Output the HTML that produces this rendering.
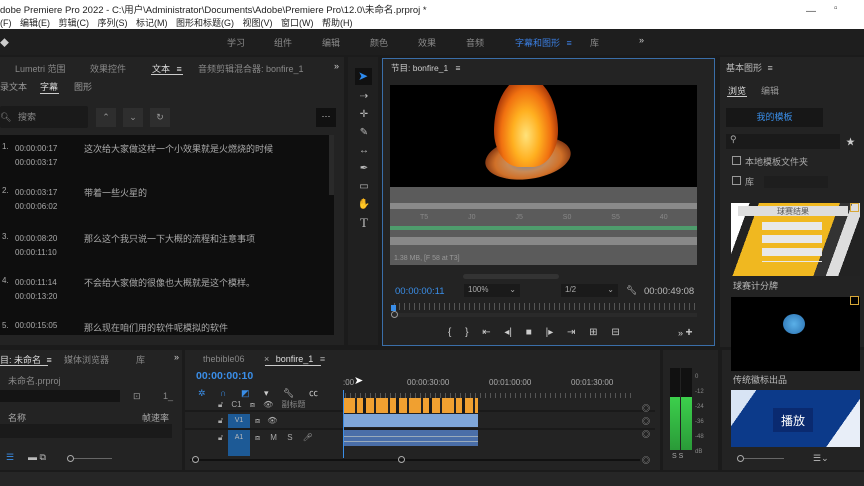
<!DOCTYPE html>
<html><head><meta charset="utf-8"><style>
*{margin:0;padding:0;box-sizing:border-box}
body{width:864px;height:486px;overflow:hidden;background:#1b1b1b;font-family:"Liberation Sans","Noto Sans CJK SC",sans-serif;font-size:9px;color:#9a9a9a;position:relative}
.a{position:absolute;white-space:nowrap}
</style></head><body>
<div class="a" style="left:0;top:0;width:864px;height:29px;background:#fff"></div>
<div class="a" style="left:0;top:2px;font-size:9.5px;color:#222">dobe Premiere Pro 2022 - C:\用户\Administrator\Documents\Adobe\Premiere Pro\12.0\未命名.prproj *</div>
<div class="a" style="left:0;top:16px;font-size:9px;color:#222;word-spacing:6px">(F) 编辑(E) 剪辑(C) 序列(S) 标记(M) 图形和标题(G) 视图(V) 窗口(W) 帮助(H)</div>
<div class="a" style="left:806px;top:6px;color:#444;font-size:10px">—</div>
<div class="a" style="left:834px;top:3px;color:#444;font-size:10px">▫</div>
<div class="a" style="left:0;top:29px;width:864px;height:26px;background:#1e1e1e"></div>
<div class="a" style="left:0;top:36px;color:#ccc">◆</div>
<div class="a" style="left:227px;top:36px;color:#8a8a8a">学习</div>
<div class="a" style="left:274px;top:36px;color:#8a8a8a">组件</div>
<div class="a" style="left:322px;top:36px;color:#8a8a8a">编辑</div>
<div class="a" style="left:370px;top:36px;color:#8a8a8a">颜色</div>
<div class="a" style="left:418px;top:36px;color:#8a8a8a">效果</div>
<div class="a" style="left:466px;top:36px;color:#8a8a8a">音频</div>
<div class="a" style="left:515px;top:36px;color:#3a7ee0">字幕和图形 <span style="margin-left:4px">≡</span></div>
<div class="a" style="left:590px;top:36px;color:#8a8a8a">库</div>
<div class="a" style="left:639px;top:35px;color:#ccc">»</div>
<div class="a" style="left:0;top:57px;width:344px;height:288px;background:#232323"></div>
<div class="a" style="left:15px;top:62px;color:#888">Lumetri 范围</div>
<div class="a" style="left:90px;top:62px;color:#888">效果控件</div>
<div class="a" style="left:152px;top:62px;color:#ddd">文本 <span style="margin-left:4px">≡</span></div>
<div class="a" style="left:151px;top:74px;width:32px;height:1px;background:#ccc"></div>
<div class="a" style="left:198px;top:62px;color:#888">音频剪辑混合器: bonfire_1</div>
<div class="a" style="left:334px;top:61px;color:#ccc">»</div>
<div class="a" style="left:0;top:80px;color:#999">录文本</div>
<div class="a" style="left:40px;top:80px;color:#ddd">字幕</div>
<div class="a" style="left:40px;top:93px;width:19px;height:1px;background:#ccc"></div>
<div class="a" style="left:74px;top:80px;color:#999">图形</div>
<div class="a" style="left:0;top:106px;width:88px;height:22px;background:#1a1a1a;border-radius:2px"></div>
<div class="a" style="left:0;top:110px;color:#888">🔍︎ <span style="margin-left:4px">搜索</span></div>
<div class="a" style="left:96px;top:108px;width:20px;height:19px;background:#2e2e2e;color:#999;text-align:center;line-height:19px">⌃</div>
<div class="a" style="left:123px;top:108px;width:20px;height:19px;background:#2e2e2e;color:#999;text-align:center;line-height:19px">⌄</div>
<div class="a" style="left:150px;top:108px;width:20px;height:19px;background:#2e2e2e;color:#999;text-align:center;line-height:19px">↻</div>
<div class="a" style="left:316px;top:108px;width:20px;height:19px;background:#111;color:#ddd;text-align:center;line-height:17px">···</div>
<div class="a" style="left:0;top:135px;width:334px;height:200px;background:#0e0e0e"></div>
<div class="a" style="left:329px;top:135px;width:5px;height:60px;background:#2a2a2a"></div>
<div class="a" style="left:2px;top:142px;color:#aaa;font-size:8px">1.</div>
<div class="a" style="left:15px;top:142px;line-height:14px;color:#aaa;font-size:8px">00:00:00:17<br>00:00:03:17</div>
<div class="a" style="left:84px;top:142px;color:#aaa">这次给大家做这样一个小效果就是火燃烧的时候</div>
<div class="a" style="left:2px;top:186px;color:#aaa;font-size:8px">2.</div>
<div class="a" style="left:15px;top:186px;line-height:14px;color:#aaa;font-size:8px">00:00:03:17<br>00:00:06:02</div>
<div class="a" style="left:84px;top:186px;color:#aaa">带着一些火星的</div>
<div class="a" style="left:2px;top:232px;color:#aaa;font-size:8px">3.</div>
<div class="a" style="left:15px;top:232px;line-height:14px;color:#aaa;font-size:8px">00:00:08:20<br>00:00:11:10</div>
<div class="a" style="left:84px;top:232px;color:#aaa">那么这个我只说一下大概的流程和注意事项</div>
<div class="a" style="left:2px;top:276px;color:#aaa;font-size:8px">4.</div>
<div class="a" style="left:15px;top:276px;line-height:14px;color:#aaa;font-size:8px">00:00:11:14<br>00:00:13:20</div>
<div class="a" style="left:84px;top:276px;color:#aaa">不会给大家做的很像也大概就是这个模样。</div>
<div class="a" style="left:2px;top:321px;color:#aaa;font-size:8px">5.</div>
<div class="a" style="left:15px;top:321px;color:#aaa;font-size:8px">00:00:15:05</div>
<div class="a" style="left:84px;top:321px;color:#aaa">那么现在咱们用的软件呢模拟的软件</div>
<div class="a" style="left:348px;top:57px;width:30px;height:288px;background:#202020"></div>
<div class="a" style="left:355px;top:68px;width:17px;height:17px;background:#111"></div>
<div class="a" style="left:358px;top:69px;color:#2e8cf0;font-size:12px">➤</div>
<div class="a" style="left:356px;top:88px;color:#bbb;font-size:10px;line-height:18px;text-align:center;width:16px">⇢<br>✛<br>✎<br>↔<br>✒<br>▭<br>✋<br><span style="font-family:'Liberation Serif';font-size:13px">T</span></div>
<div class="a" style="left:382px;top:58px;width:333px;height:288px;border:1px solid #3a6ea8;background:#232323"></div>
<div class="a" style="left:391px;top:62px;color:#ccc;font-size:8.5px">节目: bonfire_1 <span style="margin-left:5px">≡</span></div>
<div class="a" style="left:390px;top:85px;width:307px;height:102px;background:#000;overflow:hidden">
 <div style="position:absolute;left:95px;top:52px;width:86px;height:42px;border-radius:50%;background:radial-gradient(ellipse at 50% 55%,#5a86c0 0%,#c98a55 35%,#d07028 55%,#7a3010 75%,rgba(0,0,0,0) 100%);transform:rotate(-8deg)"></div>
 <div style="position:absolute;left:104px;top:-8px;width:64px;height:90px;border-radius:50% 50% 40% 40%/60% 60% 40% 40%;background:radial-gradient(ellipse at 50% 65%,#ffe27a 0%,#ffb020 30%,#f07010 55%,#a03008 75%,rgba(0,0,0,0) 100%)"></div>
</div>
<div class="a" style="left:390px;top:187px;width:307px;height:78px;background:#5b5b5b"></div>
<div class="a" style="left:390px;top:203px;width:307px;height:6px;background:#8a8a8a"></div>
<div class="a" style="left:390px;top:226px;width:307px;height:4px;background:#4e9c6c"></div>
<div class="a" style="left:390px;top:237px;width:307px;height:8px;background:#888"></div>
<div class="a" style="left:390px;top:214px;width:307px;font-size:7px;color:#888;word-spacing:38px;padding-left:30px">T5 J0 J5 S0 S5 40</div>
<div class="a" style="left:394px;top:255px;font-size:7px;color:#999">1.38 MB, [F 58 at T3]</div>
<div class="a" style="left:463px;top:274px;width:96px;height:5px;background:#333;border-radius:3px"></div>
<div class="a" style="left:395px;top:286px;color:#3a8ee8;font-size:9.5px">00:00:00:11</div>
<div class="a" style="left:464px;top:284px;width:56px;height:13px;background:#1a1a1a;color:#aaa;font-size:8px;padding:1px 4px">100% <span style="float:right">⌄</span></div>
<div class="a" style="left:561px;top:284px;width:57px;height:13px;background:#1a1a1a;color:#aaa;font-size:8px;padding:1px 4px">1/2 <span style="float:right">⌄</span></div>
<div class="a" style="left:626px;top:285px;color:#ccc">🔧︎</div>
<div class="a" style="left:644px;top:286px;color:#bbb;font-size:9.5px">00:00:49:08</div>
<div class="a" style="left:394px;top:303px;width:304px;height:7px;background:repeating-linear-gradient(90deg,#555 0 1px,transparent 1px 5px)"></div>
<div class="a" style="left:391px;top:305px;width:5px;height:6px;background:#3a8ee8"></div>
<div class="a" style="left:393px;top:313px;width:304px;height:4px;background:#2a2a2a"></div>
<div class="a" style="left:391px;top:311px;width:7px;height:7px;border:1px solid #999;border-radius:50%"></div>
<div class="a" style="left:448px;top:327px;color:#ccc;font-size:10px;word-spacing:11px">{ } ⇤ ◂| ■ |▸ ⇥ ⊞ ⊟</div>
<div class="a" style="left:678px;top:325px;color:#ccc">» <b style="font-size:12px">+</b></div>
<div class="a" style="left:720px;top:57px;width:144px;height:290px;background:#232323"></div>
<div class="a" style="left:726px;top:61px;color:#bbb">基本图形 <span style="margin-left:3px">≡</span></div>
<div class="a" style="left:728px;top:84px;color:#ddd">浏览</div>
<div class="a" style="left:727px;top:96px;width:20px;height:1px;background:#ccc"></div>
<div class="a" style="left:761px;top:84px;color:#999">编辑</div>
<div class="a" style="left:726px;top:108px;width:97px;height:19px;background:#171717;color:#3a8ee8;text-align:center;line-height:19px">我的模板</div>
<div class="a" style="left:726px;top:134px;width:114px;height:15px;background:#1a1a1a;color:#aaa;padding-left:4px">⚲</div>
<div class="a" style="left:846px;top:135px;color:#ccc">★</div>
<div class="a" style="left:732px;top:156px;width:9px;height:9px;border:1px solid #999"></div>
<div class="a" style="left:745px;top:155px;color:#aaa">本地模板文件夹</div>
<div class="a" style="left:732px;top:176px;width:9px;height:9px;border:1px solid #999"></div>
<div class="a" style="left:745px;top:175px;color:#aaa">库</div>
<div class="a" style="left:764px;top:176px;width:64px;height:12px;background:#1e1e1e"></div>
<div class="a" style="left:731px;top:203px;width:129px;height:73px;background:linear-gradient(110deg,#fff 0 12%,#222 12% 18%,#f0b820 18% 70%,#333 70% 78%,#ddd 78% 86%,#222 86%)"></div>
<div class="a" style="left:738px;top:206px;width:110px;height:10px;background:#ddd;color:#555;font-size:8px;text-align:center">球赛结果</div>
<div class="a" style="left:762px;top:222px;width:60px;height:40px;background:repeating-linear-gradient(180deg,#e8e8e8 0 8px,transparent 8px 13px)"></div>
<div class="a" style="left:733px;top:279px;color:#bbb">球赛计分牌</div>
<div class="a" style="left:731px;top:297px;width:129px;height:52px;background:#000"></div>
<div class="a" style="left:783px;top:314px;width:22px;height:20px;border-radius:50%;background:radial-gradient(circle,#5ab0e8,#2a70b0)"></div>
<div class="a" style="left:850px;top:296px;width:9px;height:9px;border:1px solid #d8a838"></div>
<div class="a" style="left:850px;top:203px;width:9px;height:9px;border:1px solid #d8a838"></div>
<div class="a" style="left:0;top:348px;width:864px;height:124px;background:#1b1b1b"></div>
<div class="a" style="left:0;top:350px;width:182px;height:120px;background:#232323"></div>
<div class="a" style="left:0;top:353px;color:#ddd">目: 未命名 <span style="margin-left:3px">≡</span></div>
<div class="a" style="left:0;top:365px;width:48px;height:1px;background:#ccc"></div>
<div class="a" style="left:64px;top:353px;color:#888">媒体浏览器</div>
<div class="a" style="left:136px;top:353px;color:#888">库</div>
<div class="a" style="left:174px;top:352px;color:#ccc">»</div>
<div class="a" style="left:8px;top:374px;color:#888">未命名.prproj</div>
<div class="a" style="left:0;top:390px;width:120px;height:12px;background:#141414"></div>
<div class="a" style="left:133px;top:391px;color:#999">⊡</div>
<div class="a" style="left:163px;top:391px;color:#888">1_</div>
<div class="a" style="left:8px;top:411px;color:#aaa">名称</div>
<div class="a" style="left:142px;top:411px;color:#aaa">帧速率</div>
<div class="a" style="left:0;top:424px;width:172px;height:14px;background:#1a1a1a"></div>
<div class="a" style="left:6px;top:452px;color:#3a8ee8">☰</div>
<div class="a" style="left:28px;top:452px;color:#bbb">▬ ⧉</div>
<div class="a" style="left:67px;top:455px;width:7px;height:7px;border:1px solid #aaa;border-radius:50%"></div>
<div class="a" style="left:74px;top:458px;width:38px;height:1px;background:#666"></div>
<div class="a" style="left:185px;top:350px;width:475px;height:120px;background:#232323"></div>
<div class="a" style="left:203px;top:354px;color:#888">thebible06</div>
<div class="a" style="left:264px;top:354px;color:#aaa">× <span style="color:#ddd;margin-left:4px">bonfire_1</span> <span style="margin-left:4px">≡</span></div>
<div class="a" style="left:265px;top:365px;width:56px;height:1px;background:#ccc"></div>
<div class="a" style="left:196px;top:370px;color:#3a8ee8;font-size:10.5px;font-weight:bold">00:00:00:10</div>
<div class="a" style="left:198px;top:386px;color:#3a8ee8;word-spacing:12px">✲ ∩ ◩ <span style="color:#ccc">▾ 🔧︎ ㏄</span></div>
<div class="a" style="left:218px;top:399px;color:#aaa;word-spacing:6px;font-size:8px">🔓︎ C1 ⧈ 👁︎ <span style="color:#888">副标题</span></div>
<div class="a" style="left:228px;top:414px;width:22px;height:14px;background:#1d5a96;color:#bbb;font-size:7px;text-align:center;line-height:14px">V1</div>
<div class="a" style="left:228px;top:430px;width:22px;height:26px;background:#1d5a96;color:#bbb;font-size:7px;text-align:center;line-height:16px">A1</div>
<div class="a" style="left:218px;top:416px;color:#aaa;font-size:8px">🔓︎</div>
<div class="a" style="left:255px;top:416px;color:#aaa;font-size:8px;word-spacing:5px">⧈ 👁︎</div>
<div class="a" style="left:218px;top:433px;color:#aaa;font-size:8px">🔓︎</div>
<div class="a" style="left:255px;top:433px;color:#aaa;font-size:8px;word-spacing:8px">⧈ M S 🎤︎</div>
<div class="a" style="left:185px;top:410px;width:470px;height:2px;background:#1a1a1a"></div>
<div class="a" style="left:185px;top:428px;width:470px;height:2px;background:#1a1a1a"></div>
<div class="a" style="left:343px;top:378px;color:#aaa;font-size:8px">:00</div>
<div class="a" style="left:407px;top:378px;color:#aaa;font-size:8px">00:00:30:00</div>
<div class="a" style="left:489px;top:378px;color:#aaa;font-size:8px">00:01:00:00</div>
<div class="a" style="left:571px;top:378px;color:#aaa;font-size:8px">00:01:30:00</div>
<div class="a" style="left:345px;top:393px;width:290px;height:5px;background:repeating-linear-gradient(90deg,#555 0 1px,transparent 1px 5px)"></div>
<div class="a" style="left:343px;top:398px;width:135px;height:15px;background:repeating-linear-gradient(90deg,#f0a030 0 12px,#222 12px 14px,#f0a030 14px 20px,#1a1a1a 20px 23px,#f0a030 23px 31px,#222 31px 33px)"></div>
<div class="a" style="left:343px;top:414px;width:135px;height:13px;background:#7fa6d8"></div>
<div class="a" style="left:343px;top:430px;width:135px;height:16px;background:#4a6ea8"></div>
<div class="a" style="left:343px;top:436px;width:135px;height:1px;background:#9ab"></div>
<div class="a" style="left:343px;top:441px;width:135px;height:1px;background:#9ab"></div>
<div class="a" style="left:343px;top:390px;width:1px;height:68px;background:#3a8ee8"></div>
<div class="a" style="left:354px;top:374px;color:#fff;font-size:11px">➤</div>
<div class="a" style="left:642px;top:402px;color:#aaa;font-size:8px;line-height:13px">◎<br>◎<br>◎<br><br>◎</div>
<div class="a" style="left:190px;top:459px;width:450px;height:2px;background:#111"></div>
<div class="a" style="left:192px;top:456px;width:7px;height:7px;border:1px solid #aaa;border-radius:50%"></div>
<div class="a" style="left:398px;top:456px;width:7px;height:7px;border:1px solid #aaa;border-radius:50%"></div>
<div class="a" style="left:663px;top:350px;width:55px;height:120px;background:#232323"></div>
<div class="a" style="left:670px;top:368px;width:22px;height:82px;background:#111"></div>
<div class="a" style="left:670px;top:397px;width:22px;height:53px;background:linear-gradient(#3cd04c,#2a9a38)"></div>
<div class="a" style="left:680px;top:368px;width:1px;height:82px;background:#222"></div>
<div class="a" style="left:695px;top:370px;color:#888;font-size:6px;line-height:15px">0<br>-12<br>-24<br>-36<br>-48<br>dB</div>
<div class="a" style="left:672px;top:453px;color:#aaa;font-size:7px">S S</div>
<div class="a" style="left:722px;top:350px;width:142px;height:120px;background:#232323"></div>
<div class="a" style="left:731px;top:347px;width:129px;height:24px;background:#000"></div>
<div class="a" style="left:733px;top:373px;color:#bbb">传统徽标出品</div>
<div class="a" style="left:731px;top:390px;width:129px;height:57px;background:linear-gradient(125deg,#d8e4f4 0 15%,#0c3a8a 15% 80%,#e8eef8 80%)"></div>
<div class="a" style="left:773px;top:408px;width:40px;height:24px;background:#0a2a70;color:#fff;font-size:12px;text-align:center;line-height:26px">播放</div>
<div class="a" style="left:737px;top:455px;width:7px;height:7px;border:1px solid #aaa;border-radius:50%"></div>
<div class="a" style="left:744px;top:458px;width:40px;height:1px;background:#666"></div>
<div class="a" style="left:813px;top:453px;color:#bbb">☰⌄</div>
<div class="a" style="left:0;top:472px;width:864px;height:14px;background:#262626"></div>
</body></html>
